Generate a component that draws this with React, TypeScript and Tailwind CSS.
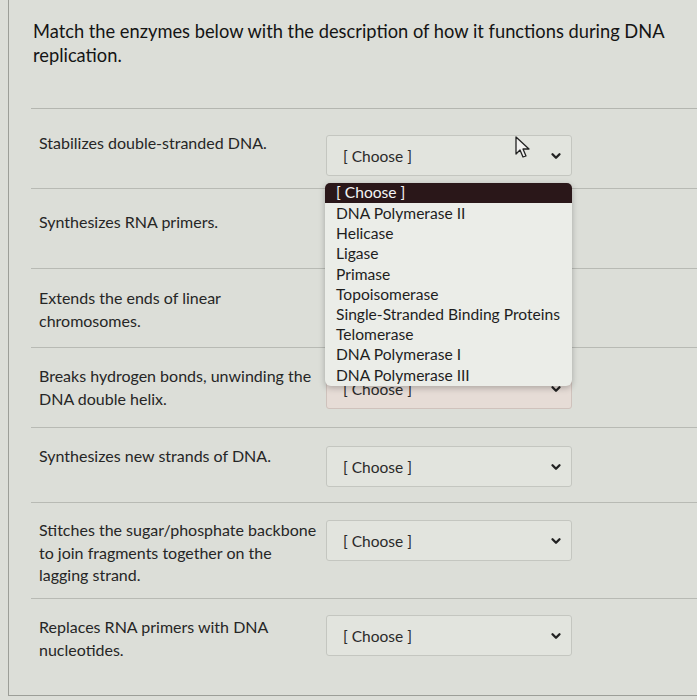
import { ChevronDown } from 'lucide-react';

type Row = { text: string[]; h: string; pt: string; st: string; select: boolean; tint?: boolean };

const rows: Row[] = [
    { text: ['Stabilizes double-stranded DNA.'], h: 'h-[80px]', pt: 'pt-[23px]', st: 'pt-[26px]', select: true },
    { text: ['Synthesizes RNA primers.'], h: 'h-[80px]', pt: 'pt-[22px]', st: 'pt-[20px]', select: false },
    { text: ['Extends the ends of linear', 'chromosomes.'], h: 'h-[79px]', pt: 'pt-[18px]', st: 'pt-[20px]', select: false },
    { text: ['Breaks hydrogen bonds, unwinding the', 'DNA double helix.'], h: 'h-[80px]', pt: 'pt-[17px]', st: 'pt-[20px]', select: true, tint: true },
    { text: ['Synthesizes new strands of DNA.'], h: 'h-[75px]', pt: 'pt-[17px]', st: 'pt-[18px]', select: true },
    { text: ['Stitches the sugar/phosphate backbone', 'to join fragments together on the', 'lagging strand.'], h: 'h-[96px]', pt: 'pt-[16px]', st: 'pt-[17px]', select: true },
    { text: ['Replaces RNA primers with DNA', 'nucleotides.'], h: 'h-[97px]', pt: 'pt-[17px]', st: 'pt-[16px]', select: true },
];

const options = [
    'DNA Polymerase II',
    'Helicase',
    'Ligase',
    'Primase',
    'Topoisomerase',
    'Single-Stranded Binding Proteins',
    'Telomerase',
    'DNA Polymerase I',
    'DNA Polymerase III',
];

function Select({ tint }: { tint?: boolean }) {
    return (
        <div className={`w-[246px] h-[41px] border rounded-[3px] flex items-center justify-between pl-[16px] pr-[8px] text-[15.5px] text-[#2a2a2a] ${tint ? 'bg-[#e6dcd6] border-[#cfc2bc]' : 'bg-[#e2e4de] border-[#c4c6c0]'}`}>
            <span className="mt-[2px]">[ Choose ]</span>
            <ChevronDown size={14} strokeWidth={4} className="text-[#222]" />
        </div>
    );
}

export default function App() {
    return (
        <div className="relative w-[697px] h-[700px] bg-[#dcded8] overflow-hidden" style={{ fontFamily: 'Lato, "Open Sans", sans-serif' }}>
            <div className="ml-[8px] w-[689px] h-[696px] border-l border-b border-[#9c9e98]">
                <div className="pl-[24px] pr-[10px] pt-[19px] h-[108px] text-[18.3px] leading-[24px] text-[#141414]">
                    Match the enzymes below with the description of how it functions during DNA replication.
                </div>
                <div className="ml-[22px] border-t border-[#b4b6b0]">
                    {rows.map((r, i) => (
                        <div key={i} className={`${r.h} flex border-b last:border-b-0 border-[#b8bab4] pl-[8px]`}>
                            <div className={`w-[287px] ${r.pt} text-[16px] leading-[22.5px] text-[#262626]`}>
                                {r.text.map((t, j) => (
                                    <div key={j}>{t}</div>
                                ))}
                            </div>
                            <div className={r.st}>{r.select && <Select tint={r.tint} />}</div>
                        </div>
                    ))}
                </div>
            </div>

            {/* open dropdown */}
            <div className="absolute left-[325px] top-[183px] w-[247px] h-[203px] bg-[#ebede8] rounded-b-[6px] rounded-t-[5px] shadow-[0_2px_6px_rgba(0,0,0,0.25)] overflow-hidden text-[15.6px] leading-[20.2px] text-[#1e1e1e]">
                <div className="bg-[#2a1719] text-[#f4f4f4] pl-[11px] h-[20px] leading-[19px]">[ Choose ]</div>
                {options.map((o) => (
                    <div key={o} className="pl-[11px]">{o}</div>
                ))}
            </div>

            {/* cursor */}
            <svg className="absolute left-[515px] top-[136px]" width="16" height="24" viewBox="0 0 16 24">
                <path d="M1 1 L1 18 L5 14 L8 21 L11 20 L8 13 L14 13 Z" fill="#f2f2f0" stroke="#222" strokeWidth="1.3" strokeLinejoin="round" />
            </svg>
        </div>
    );
}
